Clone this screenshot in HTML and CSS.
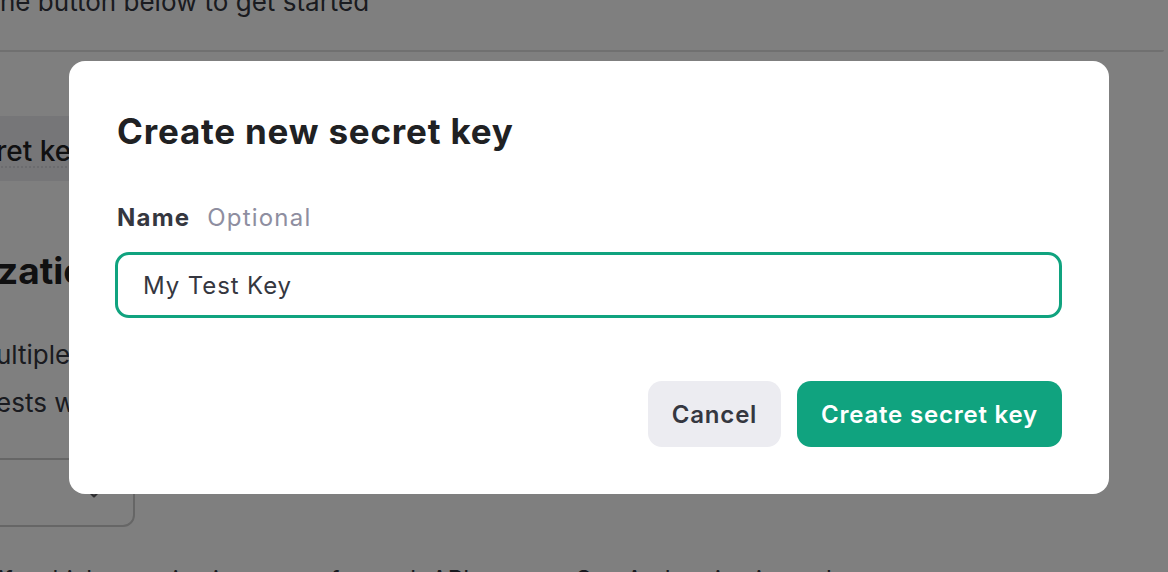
FILE: index.html
```html
<!DOCTYPE html>
<html lang="en">
<head>
<meta charset="utf-8">
<title>Create new secret key</title>
<link rel="stylesheet" href="styles.css">
</head>
<body>
<div class="page">
  <div class="intro">ne button below to get started</div>
  <div class="divider"></div>
  <div class="create-btn"><span class="create-label">ret key</span></div>
  <h2 class="org-title">zation</h2>
  <p class="org-text">ultiple organizations<br>ests will count</p>
  <div class="select-box"><svg class="chev" viewBox="0 0 16 16" width="16" height="16"><path d="M3 6l5 5 5-5" fill="none" stroke="#5a5a5e" stroke-width="2" stroke-linecap="round" stroke-linejoin="round"/></svg></div>
  <p class="footer-text">ify which organization to use for each API request. See Authentication to learn more.</p>
</div>
<div class="overlay">
  <div class="modal">
    <h1 class="modal-title">Create new secret key</h1>
    <div class="field-label"><span class="label-main">Name</span><span class="label-opt">Optional</span></div>
    <div class="input">My Test Key</div>
    <div class="actions">
      <button class="btn btn-cancel">Cancel</button>
      <button class="btn btn-primary">Create secret key</button>
    </div>
  </div>
</div>
</body>
</html>
```

FILE: styles.css
```css
html, body {
  margin: 0;
  padding: 0;
  width: 1168px;
  height: 572px;
  overflow: hidden;
  background: #ffffff;
  font-family: "Inter", "Noto Sans", sans-serif;
  color: #202123;
}

.page {
  width: 1168px;
  height: 572px;
  overflow: hidden;
  display: flex;
  flex-direction: column;
  align-items: flex-start;
}

.page > * {
  flex-shrink: 0;
}

.intro {
  font-size: 26px;
  line-height: 32px;
  margin-top: -14px;
  color: #353740;
  white-space: nowrap;
}

.divider {
  width: 1164px;
  height: 0;
  border-bottom: 2px solid #e0e0e0;
  border-bottom-right-radius: 6px;
  margin-top: 32px;
}

.create-btn {
  margin-top: 64px;
  width: 120px;
  height: 65px;
  background: #ececf1;
  display: flex;
  align-items: center;
}

.create-label {
  font-size: 28px;
  font-weight: 500;
  color: #202123;
  border-bottom: 2px dotted #d6d6dc;
  line-height: 30px;
  margin-left: -4px;
  margin-top: 6px;
}

.org-title {
  margin: 68px 0 0 -3px;
  font-size: 37px;
  line-height: 44px;
  font-weight: 700;
  color: #202123;
}

.org-text {
  margin: 38px 0 0 -4px;
  font-size: 26px;
  line-height: 48px;
  color: #353740;
  white-space: nowrap;
}

.select-box {
  margin-top: 31px;
  margin-left: -20px;
  width: 121px;
  height: 65px;
  border: 2px solid #cccccc;
  border-radius: 12px;
  display: flex;
  align-items: center;
  justify-content: flex-end;
  padding-right: 30px;
  box-sizing: content-box;
}

.chev {
  width: 18px;
  height: 18px;
}

.footer-text {
  margin: 37px 0 0 -2px;
  font-size: 24px;
  line-height: 32px;
  color: #353740;
  white-space: nowrap;
}

.overlay {
  position: fixed;
  inset: 0;
  background: rgba(0, 0, 0, 0.5);
  display: flex;
  align-items: flex-start;
  padding-top: 61px;
  padding-left: 69px;
  box-sizing: border-box;
}

.modal {
  width: 1040px;
  height: 433px;
  background: #ffffff;
  border-radius: 16px;
  padding: 48px 47px 0 48px;
  box-sizing: border-box;
  display: flex;
  flex-direction: column;
}

.modal-title {
  margin: 0;
  font-size: 35px;
  line-height: 44px;
  font-weight: 700;
  color: #202123;
  letter-spacing: 0.8px;
}

.field-label {
  margin-top: 50px;
  font-size: 24px;
  line-height: 30px;
  display: flex;
  gap: 17px;
  letter-spacing: 1.2px;
}

.label-main {
  font-weight: 700;
  color: #353740;
}

.label-opt {
  color: #8e8ea0;
}

.input {
  margin-top: 19px;
  height: 66px;
  border: 3px solid #10a37f;
  border-radius: 14px;
  box-sizing: border-box;
  padding: 0 25px;
  display: flex;
  align-items: center;
  font-size: 24px;
  color: #353740;
  margin-left: -2px;
  letter-spacing: 0.9px;
}

.actions {
  margin-top: 63px;
  display: flex;
  justify-content: flex-end;
  gap: 16px;
}

.btn {
  height: 66px;
  border: none;
  border-radius: 14px;
  font-family: inherit;
  font-size: 24px;
  font-weight: 600;
  padding: 0;
  cursor: pointer;
  letter-spacing: 0.8px;
}

.btn-cancel {
  background: #ececf1;
  color: #353740;
  width: 133px;
}

.btn-primary {
  background: #10a37f;
  color: #ffffff;
  width: 265px;
}
```
